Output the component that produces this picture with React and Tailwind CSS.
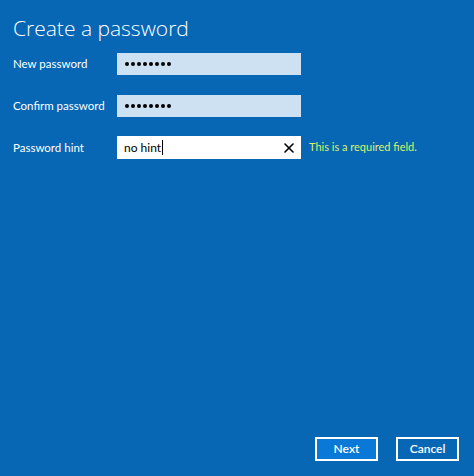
import React from "react";
import { X } from "lucide-react";

const font = { fontFamily: 'Lato, "Open Sans", sans-serif' };

function Field({ label, children, note }) {
  return (
    <div className="flex items-center h-[23px]">
      <label className="w-[104px] text-[11.5px] text-white">{label}</label>
      {children}
      {note && <span className="ml-[8px] text-[11px] text-[#d8f26a]">{note}</span>}
    </div>
  );
}

// masked password: eight round bullets
function Dots() {
  return (
    <div className="flex h-[22px] w-[184px] items-center gap-[2px] bg-[#cde1f2] pl-[8px]">
      {[0, 1, 2, 3, 4, 5, 6, 7].map((i) => (
        <span key={i} className="h-[4px] w-[4px] rounded-full bg-black" />
      ))}
    </div>
  );
}

export default function App() {
  return (
    <div style={font} className="flex h-[476px] w-[474px] flex-col bg-[#0767b5]">
      <h1
        style={{ fontFamily: '"Open Sans", sans-serif' }}
        className="ml-[13px] mt-[13px] text-[21px] font-light leading-[30px] text-white"
      >
        Create a password
      </h1>
      <div className="ml-[13px] mt-[9px] flex flex-col gap-[19px]">
        <Field label="New password">
          <Dots />
        </Field>
        <Field label="Confirm password">
          <Dots />
        </Field>
        <Field label="Password hint" note="This is a required field.">
          <div className="flex h-[23px] w-[184px] items-center justify-between bg-white pl-[7px] pr-[4px] text-[12px] text-black">
            <span className="flex items-center">
              no hint<span className="ml-[1px] h-[15px] w-px bg-black" />
            </span>
            <X size={16} strokeWidth={2.4} />
          </div>
        </Field>
      </div>
      <div className="mt-auto mb-[15px] mr-[15px] flex justify-end gap-[18px]">
        <button className="h-[24px] w-[63px] border-2 border-white bg-[#0a78d6] text-[12px] font-semibold text-white">
          Next
        </button>
        <button className="h-[24px] w-[63px] border-2 border-white text-[12px] font-semibold text-white">
          Cancel
        </button>
      </div>
    </div>
  );
}
